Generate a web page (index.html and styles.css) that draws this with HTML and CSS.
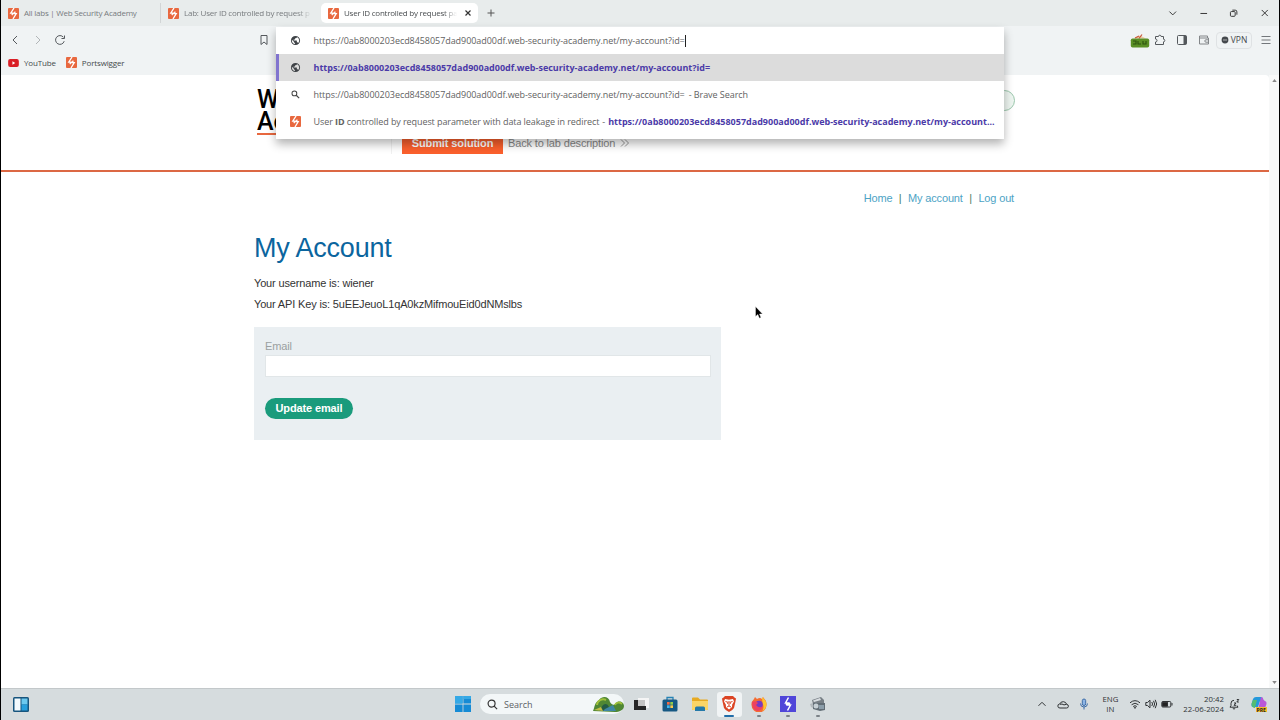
FILE: index.html
```html
<!DOCTYPE html>
<html lang="en">
  <head>
    <meta charset="UTF-8" />
    <meta name="viewport" content="width=device-width, initial-scale=1.0" />
    <title>My Account</title>
    <link rel="stylesheet" href="styles.css">
  </head>
  <body>
    <!-- Shared icons -->
    <svg class="defs" width="0" height="0">
      <symbol id="bolt" viewBox="0 0 12 12">
        <rect width="12" height="12" rx="1" fill="#e8683f" />
        <path d="M6.6 0 3 5.6h2.6L4.2 7.8M5.4 12 9 6.2H6.5L8 4" fill="none" stroke="#fff" stroke-width="1.4" />
      </symbol>
      <symbol id="globe" viewBox="0 0 24 24">
        <path fill="#3f4347" d="M12 2a10 10 0 1 0 0 20 10 10 0 0 0 0-20zm-1 17.900c-3.900-.5-7-3.900-7-7.900 0-.6.100-1.200.200-1.800L9 15v1c0 1.100.9 2 2 2zm6.900-2.500c-.3-.8-1-1.400-1.900-1.400h-1v-3c0-.6-.4-1-1-1H8v-2h2c.6 0 1-.4 1-1V7h2c1.100 0 2-.9 2-2v-.4a8 8 0 0 1 2.900 12.800z" />
      </symbol>
    </svg>

    <div class="screen">
      <!-- Tabs -->
      <div class="tabs">
        <div class="tab tab-first"><svg class="fav"><use href="#bolt" /></svg><span>All labs | Web Security Academy</span></div>
        <div class="tab tab-second"><svg class="fav"><use href="#bolt" /></svg><span class="fade">Lab: User ID controlled by request p</span></div>
        <div class="tab tab-active">
          <svg class="fav"><use href="#bolt" /></svg><span class="fade">User ID controlled by request pa</span>
          <svg class="tab-close" viewBox="0 0 8 8"><path d="M1.500 1.500l5 5M6.500 1.500l-5 5" stroke="#333" stroke-width="1.200" /></svg>
        </div>
        <svg class="new-tab" viewBox="0 0 8 8"><path d="M4 .5v7M.5 4h7" stroke="#555" /></svg>
        <div class="window-buttons">
          <svg viewBox="0 0 10 10"><path d="M1.500 3.500 5 7l3.500-3.500" /></svg>
          <svg viewBox="0 0 10 10"><path d="M1.500 5.500h7" /></svg>
          <svg viewBox="0 0 10 10"><rect x="1.500" y="3.500" width="5" height="5" rx="1" /><path d="M3.500 2h3q1.800 0 1.800 1.800v3" /></svg>
          <svg viewBox="0 0 10 10"><path d="M1.800 1.800l6.400 6.400M8.200 1.800 1.800 8.200" /></svg>
        </div>
      </div>

      <!-- Toolbar -->
      <div class="toolbar">
        <svg class="tool back" viewBox="0 0 12 12"><path d="M8 2 4 6l4 4" /></svg>
        <svg class="tool forward" viewBox="0 0 12 12"><path d="M4 2l4 4-4 4" /></svg>
        <svg class="tool reload" viewBox="0 0 12 12"><path d="M10.200 7.200a4.400 4.400 0 1 1-.8-4M10.500 1.500v3h-3" /></svg>
        <svg class="tool bookmark" viewBox="0 0 12 12"><path d="M3 1.500h6v9L6 8l-3 2.500z" /></svg>

        <div class="tool-right">
          <svg class="ext" viewBox="0 0 20 16">
            <path d="M4 5 10 2l6 3" fill="#e9c9a0" />
            <path d="M5 4.500 9 2.500M9 5l3-4" stroke="#c8553a" stroke-width="1.200" />
            <rect x=".8" y="5" width="18.400" height="9" rx="1.800" fill="#5a8f25" />
            <path d="M3 7.500h3v3H3m5-3v3h3m2-3v3h3v-3" fill="none" stroke="#2c5210" stroke-width="1.100" />
          </svg>
          <svg class="tool" viewBox="0 0 12 12"><path d="M1.500 2.500H4.500a1.300 1.300 0 0 1 2.600 0H9.500v2.700a1.300 1.300 0 0 1 0 2.600v2.700h-8V8a1.500 1.500 0 0 0 0-3z" /></svg>
          <svg class="tool" viewBox="0 0 12 12"><rect x="1.500" y="1.500" width="9" height="9" rx="1" /><path d="M8 2h2v8H8z" fill="#55595d" /></svg>
          <svg class="tool wallet" viewBox="0 0 12 12"><path d="M1.500 2h8v2M1.500 2v8h9V4h-9M10.500 5.800H8a1.200 1.200 0 0 0 0 2.400h2.500" /></svg>
          <div class="vpn"><svg viewBox="0 0 8 8"><circle cx="4" cy="4" r="3.400" fill="#45494d" /><path d="M2 4h4" stroke="#ccc" stroke-width=".8" /></svg>VPN</div>
          <svg class="tool menu" viewBox="0 0 12 12"><path d="M1.500 2.500h9M1.500 6h9M1.500 9.500h9" /></svg>
        </div>

        <!-- Address bar with suggestions -->
        <div class="omnibox">
          <div class="row url"><svg class="lead"><use href="#globe" /></svg><span class="link">https://0ab8000203ecd8458057dad900ad00df.web-security-academy.net/my-account?id=</span><i class="caret"></i></div>
          <div class="row selected"><svg class="lead"><use href="#globe" /></svg><b class="strong-url">https://0ab8000203ecd8458057dad900ad00df.web-security-academy.net/my-account?id=</b></div>
          <div class="row"><svg class="lead" viewBox="0 0 12 12"><circle cx="4.800" cy="4.800" r="2.600" fill="none" stroke="#444" stroke-width="1.100" /><path d="M6.800 6.800 10 10" stroke="#444" stroke-width="1.300" /></svg><span class="link">https://0ab8000203ecd8458057dad900ad00df.web-security-academy.net/my-account?id=</span><span class="engine">- Brave Search</span></div>
          <div class="row"><svg class="lead"><use href="#bolt" /></svg><span class="title">User <b>ID</b> controlled by request parameter with data leakage in redirect</span><span class="dash">-</span><b class="long-url">https://0ab8000203ecd8458057dad900ad00df.web-security-academy.net/my-account...</b></div>
        </div>
      </div>

      <!-- Bookmarks -->
      <div class="bookmarks">
        <svg class="yt" viewBox="0 0 12 9"><rect width="12" height="9" rx="2.200" fill="#d91f26" /><path d="M4.800 2.600v3.800L8 4.500z" fill="#fff" /></svg><span>YouTube</span>
        <svg class="fav"><use href="#bolt" /></svg><span>Portswigger</span>
      </div>

      <!-- Page -->
      <div class="viewport">
        <div class="page">
          <header class="lab-header">
            <div class="logo"><div>W</div><div>Ac</div></div>
            <div class="lab-actions">
              <button class="submit">Submit solution</button>
              <span class="back-link">Back to lab description</span>
              <svg viewBox="0 0 10 10"><path d="M1 1.500 4.500 5 1 8.500M5 1.500 8.500 5 5 8.500" /></svg>
            </div>
            <div class="lab-status"></div>
          </header>

          <main class="container">
            <nav><a>Home</a><i>|</i><a>My account</a><i>|</i><a>Log out</a></nav>
            <h1>My Account</h1>
            <p>Your username is: wiener</p>
            <p>Your API Key is: 5uEEJeuoL1qA0kzMifmouEid0dNMslbs</p>
            <form>
              <label for="email">Email</label>
              <input type="email" id="email" />
              <button type="button">Update email</button>
            </form>
          </main>
          <svg class="cursor" viewBox="0 0 8 13"><path d="M.5.5v10l2.300-2 1.600 3.700 1.600-.7L4.500 8h3z" fill="#000" stroke="#fff" stroke-width=".4" /></svg>
        </div>
        <div class="scrollbar">
          <svg viewBox="0 0 6 4"><path d="M0 4 3 0l3 4z" /></svg>
          <svg viewBox="0 0 6 4"><path d="M0 0l3 4 3-4z" /></svg>
        </div>
      </div>

      <!-- Taskbar -->
      <div class="taskbar">
        <svg class="widgets" viewBox="0 0 16 15">
          <rect width="16" height="15" rx="1.500" fill="#17557e" />
          <path d="M1.500 1.500h6v12h-6z" fill="#f3fafd" /><path d="M8.500 1.500h6v6h-6z" fill="#6cc9ef" /><path d="M8.500 7.500h6v6h-6z" fill="#279fdc" />
        </svg>

        <div class="apps">
          <svg class="start" viewBox="0 0 16 16"><path d="M0 0h7.600v7.600H0zM8.400 0H16v7.600H8.400zM0 8.400h7.600V16H0zM8.400 8.400H16V16H8.400z" fill="#168bd5" /><path d="M0 0h7.600v7.600H0zM8.400 0H16v3H8.400z" fill="#35a9e6" /></svg>
          <div class="search">
            <svg class="search-icon" viewBox="0 0 12 12"><circle cx="5" cy="5" r="3.800" /><path d="M7.800 7.800 11 11" /></svg>
            <span>Search</span>
            <svg class="search-art" viewBox="0 0 31 17">
              <path d="M0 15C2 11 1 7 6 4c4-5 10-3 11 2 2 3 4 4 6 1 3-3 8-1 8 3 0 4-5 6-9 6z" fill="#4f8734" />
              <path d="M4 9c0-4 5-7 9-5M22 9c1-3 5-3 7-1" stroke="#a0c03c" stroke-width="2" fill="none" />
              <path d="M10 9q4-3 6 2l5 4H6z" fill="#245c45" /><path d="M12 13l8-4 3 6H10z" fill="#3d86a5" /><path d="M1 14l7-3 2 4z" fill="#c3bc45" />
            </svg>
          </div>
          <div class="app"><svg viewBox="0 0 16 16"><path d="M5 2h11v10H5z" fill="#f5f5f5" /><path d="M1 4h4v6h8v4H1z" fill="#262626" /><path d="M5 4h7v6H5z" fill="#c4c4c4" /></svg></div>
          <div class="app"><svg viewBox="0 0 16 16"><path d="M5 4V1.500h6V4" fill="none" stroke="#2783b5" stroke-width="1.300" /><rect x=".5" y="3.500" width="15" height="12" rx="1.500" fill="#165883" /><path d="M5 6h2.700v2.700H5z" fill="#ef6a45" /><path d="M8.300 6H11v2.700H8.300z" fill="#90ca4b" /><path d="M5 9.300h2.700V12H5z" fill="#40b6ed" /><path d="M8.300 9.300H11V12H8.300z" fill="#fac94b" /></svg></div>
          <div class="app"><svg viewBox="0 0 16 16"><path d="M0 2.500Q0 1.500 1 1.500h5l2 2h7q1 0 1 1V13q0 1-1 1H1q-1 0-1-1z" fill="#e7aa22" /><path d="M0 5h16v8q0 1-1 1H1q-1 0-1-1z" fill="#fbd566" /><path d="M3 15v-3q0-1.500 1.500-1.500h7Q13 10.500 13 12v3z" fill="#2479a9" /></svg></div>
          <div class="app current"><svg viewBox="0 0 16 16"><path d="M4 0h8l1.500 1.500 1.500 1-.5 3L13 12q-1 2-5 4-4-2-5-4L1.500 5.500 1 2.500l1.500-1z" fill="#db4525" /><path d="M4 3l4 .8L12 3l1 2.500-1.800 3L11 11l-3 2.500L5 11l-.2-2.500L3 5.500z" fill="#fff" /><path d="M4.500 5.500l2.500.8-.5 1.500M11.500 5.500 9 6.300l.5 1.500M8 5v5M6 11l2-1 2 1" fill="none" stroke="#db4525" /></svg></div>
          <div class="app running"><svg viewBox="0 0 16 16"><path d="M3 3l1-2 2 2q3-2 5 0l1-2q4 4 3.500 8a7.500 7.500 0 0 1-15 0Q0 6 3 3z" fill="#f46c32" /><path d="M11 1q5 4 4.500 8-.5 4-4 6 2-4 0-8z" fill="#ffc52f" /><circle cx="8" cy="8.500" r="3.800" fill="#773bc1" /><path d="M1 6q4-2 6 1L5 9q3 4 7 1-1 5-6 5-5-1-5-9z" fill="#ed4260" /></svg></div>
          <div class="app running"><svg viewBox="0 0 16 16"><path d="M0 0h16v16H0z" fill="#5046d9" /><path d="M8.500 1.500 5.500 7H8l-2 2M7.500 14.500 10.500 9H8l2-2" fill="none" stroke="#fff" stroke-width="1.500" /></svg></div>
          <div class="app running"><svg viewBox="0 0 16 16"><path d="M2 4l9-3 3 3v4H3z" fill="#777f85" /><path d="M3 4.500 10 2l1 2-7 2z" fill="#d8dde0" /><path d="M3 7h12v7l-5 1-7-2z" fill="#626d75" /><circle cx="6" cy="10" r="2.500" fill="#c7d0d5" /><path d="M9 9h5v4H9z" fill="#8b9da9" /><path d="M0 8l3-1v5l-2-1z" fill="#b2b8bc" /></svg></div>
        </div>

        <div class="tray">
          <svg class="chevron" viewBox="0 0 12 12"><path d="M2.500 7.800 6 4.300l3.500 3.500" /></svg>
          <svg class="cloud" viewBox="0 0 12 12"><path d="M3 10h6.500a1.800 1.800 0 0 0 .2-3.600A3.700 3.700 0 0 0 2.700 6 2 2 0 0 0 3 10zM3 6.300q2-.8 4 .6l2.500-.6" /></svg>
          <svg class="mic" viewBox="0 0 12 12"><rect x="4.300" y="1" width="3.400" height="6.500" rx="1.700" fill="#8db5e5" /><path d="M2.500 5.500a3.500 3.500 0 0 0 7 0M6 9v2.500" /></svg>
          <div class="lang">ENG<br>IN</div>
          <svg class="wifi" viewBox="0 0 12 12"><path d="M1 4.800q5-4.300 10 0M2.600 6.700q3.400-3 6.800 0M4.200 8.500q1.800-1.600 3.600 0" /><circle cx="6" cy="9.700" r=".6" /></svg>
          <svg class="sound" viewBox="0 0 12 12"><path d="M.8 4.500h1.700L5 2.200v7.600L2.500 7.500H.8zM6.800 4q1.500 2 0 4M8.500 2.800q2.300 3.200 0 6.400M10.200 1.800q3 4.200 0 8.400" /></svg>
          <svg class="battery" viewBox="0 0 12 12"><rect x=".8" y="3.500" width="9" height="5.500" rx="1" /><path d="M1.500 4.200h5v4h-5z" fill="#222" /><path d="M11 5v2.500" /></svg>
          <div class="clock">20:42<br>22-06-2024</div>
          <svg class="bell" viewBox="0 0 12 12"><path d="M6 2.300a3 3 0 0 0-3 3v2.200L2 9.200h8L9 7.500M4.800 10.500q1.200 1 2.400 0M6 5h2L6 7.300h2M8.800 1.500h2L8.800 4h2" /></svg>
          <svg class="copilot" viewBox="0 0 16 16">
            <path d="M5 1h5q1.500 0 2 2l.5 2H9L7 11H2Q0 11 .5 8L2 3q.8-2 3-2z" fill="#2599db" />
            <path d="M10 1q2 0 2.500 3l1.500 1q2 .5 1.500 3L14 12q-1 2-3 2H7l2-9z" fill="#ba58d7" />
            <path d="M.5 8 2 4h4L4 12q-3 0-3.500-4z" fill="#54bd72" /><path d="M5 11h11v5H5z" fill="#f7bd28" />
            <text x="5.500" y="15.500">PRE</text>
          </svg>
        </div>
      </div>
    </div>
  </body>
</html>
```
FILE: styles.css
```css
:root {
  --ui: "Open Sans", "Noto Sans", sans-serif;
  --page: "Liberation Sans", Arial, sans-serif;
  --chrome: #f0f3f4;
  --strip: #e8ecec;
  --link: #4da3c5;
  --purple: #4b3aa8;
}

* {
  box-sizing: border-box;
}

body {
  margin: 0;
  overflow: hidden;
  background: #fff;
  font-family: var(--ui);
}

.defs {
  position: absolute;
}

svg {
  display: block;
  flex: none;
}

.screen {
  width: 1280px;
  height: 720px;
  display: flex;
  flex-direction: column;
  border: solid #000;
  border-width: 0 1px;
}

/* Tabs */
.tabs {
  height: 26px;
  flex: none;
  display: flex;
  align-items: center;
  background: var(--strip);
  font-size: 8px;
  letter-spacing: -0.230px;
  color: #777b7e;
  white-space: nowrap;
}

.tab {
  display: flex;
  align-items: center;
  height: 20px;
}

.tab span {
  padding-bottom: 1px;
}

.fav {
  width: 11px;
  height: 11px;
  margin-right: 5px;
}

.tab-first {
  width: 160px;
  padding-left: 7px;
  border-right: 1px solid #d2d5d6;
}

.tab-second {
  width: 160px;
  padding-left: 7px;
}

.fade {
  width: 128px;
  -webkit-mask-image: linear-gradient(90deg, #000 88%, transparent);
  mask-image: linear-gradient(90deg, #000 88%, transparent);
}

.tab-active {
  width: 157px;
  padding-left: 7px;
  background: #fff;
  border-radius: 5px;
  color: #4b4f52;
}

.tab-active .fade {
  width: 113px;
}

.tab-close {
  width: 8px;
  height: 8px;
  margin-left: 7px;
}

.new-tab {
  width: 8px;
  height: 8px;
  margin-left: 9px;
}

.window-buttons {
  margin-left: auto;
  display: flex;
  gap: 21px;
  padding-right: 10px;
}

.window-buttons svg {
  width: 9.500px;
  height: 10px;
  fill: none;
  stroke: #303030;
}

/* Toolbar */
.toolbar {
  position: relative;
  height: 28px;
  flex: none;
  display: flex;
  align-items: center;
  background: var(--chrome);
}

.tool {
  width: 12px;
  height: 12px;
  fill: none;
  stroke: #55595d;
}

.back {
  margin-left: 8px;
}

.forward {
  margin-left: 11px;
  opacity: 0.400;
}

.reload {
  margin-left: 10px;
}

.bookmark {
  margin-left: 192px;
}

.tool-right {
  margin-left: auto;
  display: flex;
  align-items: center;
  padding-right: 7px;
}

.ext {
  width: 20px;
  height: 17px;
  margin: 3px 4px 0 0;
}

.tool-right .tool + .tool {
  margin-left: 10px;
}

.wallet {
  opacity: 0.700;
}

.vpn {
  width: 36px;
  height: 17px;
  margin: 0 8px 0 6px;
  display: flex;
  align-items: center;
  justify-content: center;
  gap: 2px;
  border: 1px solid #dfe2e4;
  border-radius: 4px;
  font-size: 8.500px;
  line-height: 12px;
  color: #44484c;
}

.vpn svg {
  width: 8px;
  height: 8px;
}

.menu {
  opacity: 0.800;
}

/* Address bar and suggestions lie over the page */
.omnibox {
  position: absolute;
  z-index: 5;
  left: 275px;
  top: 1px;
  width: 728px;
  height: 112px;
  background: #fff;
  box-shadow: 0 5px 9px rgba(0, 0, 0, 0.300);
}

.row {
  height: 27px;
  display: flex;
  align-items: center;
  padding-left: 14px;
  font-size: 9px;
  color: #626262;
  white-space: nowrap;
}

.row span {
  padding-bottom: 1px;
  letter-spacing: -0.055px;
}

.lead {
  width: 11px;
  height: 11px;
  margin-right: 12.500px;
}

.selected {
  background: #dcdcdc;
  border-left: 3px solid #8174cf;
  padding-left: 11px;
}

.row.selected b,
.long-url {
  color: var(--purple);
}

.row b {
  font-weight: 700;
}

.row .title {
  letter-spacing: -0.080px;
}

.long-url {
  padding-bottom: 1px;
}

.caret {
  width: 1px;
  height: 12px;
  background: #222;
}

.row .engine {
  margin-left: 4px;
}

.dash {
  margin: 0 3px;
}

/* Bookmarks */
.bookmarks {
  height: 21px;
  flex: none;
  display: flex;
  align-items: center;
  padding: 0 0 4px 7px;
  background: var(--chrome);
  font-size: 8px;
  letter-spacing: -0.150px;
  color: #45494c;
}

.yt {
  width: 11px;
  height: 8px;
  margin-right: 5px;
}

.bookmarks span {
  margin-right: 10px;
}

/* Page */
.viewport {
  flex: 1;
  min-height: 0;
  display: flex;
  background: var(--chrome);
}

.page {
  position: relative;
  width: 1268px;
  background: #fff;
  border-top-right-radius: 4px;
  font-family: var(--page);
}

.scrollbar {
  flex: 1;
  display: flex;
  flex-direction: column;
  align-items: center;
  justify-content: space-between;
  padding: 4px 0;
  background: #f8f9f9;
}

.scrollbar svg {
  width: 5px;
  height: 3px;
  fill: #888;
}

.lab-header {
  height: 97px;
  display: flex;
  padding-left: 255px;
  border-bottom: 2px solid #dc6844;
}

.logo {
  width: 135px;
  height: 46px;
  margin-top: 14px;
  padding-left: 1px;
  font-family: Roboto, sans-serif;
  font-size: 25px;
  font-weight: 500;
  line-height: 22px;
  color: #000;
}

.logo::after {
  content: "";
  display: block;
  width: 60px;
  height: 2px;
  background: #e8683f;
}

.lab-actions {
  width: 501px;
  margin-top: 56px;
  height: 23px;
  padding-left: 10px;
  display: flex;
  align-items: center;
  border-left: 1px solid #f1f1f1;
}

.submit {
  width: 101px;
  height: 23px;
  padding: 0;
  border: 0;
  background: #fb602d;
  color: #fff;
  font: bold 11px var(--page);
  letter-spacing: -0.100px;
}

.back-link {
  margin: 0 5px;
  font-size: 11px;
  letter-spacing: -0.150px;
  color: #888;
}

.lab-actions svg {
  width: 10px;
  height: 10px;
  fill: none;
  stroke: #999;
}

.lab-status {
  width: 123px;
  height: 21px;
  margin-top: 15px;
  border: 1px solid #9ac7ac;
  border-radius: 11px;
  background: #edf5f0;
}

.container {
  width: 760px;
  margin-left: 253px;
  font-size: 11px;
  letter-spacing: -0.160px;
  color: #333;
}

nav {
  display: flex;
  justify-content: flex-end;
  padding-top: 20px;
  line-height: 13px;
  color: var(--link);
}

nav i {
  margin: 0 6.500px;
  font-style: normal;
  color: #498064;
}

h1 {
  margin: 28px 0 14px;
  font-size: 27px;
  letter-spacing: -0.200px;
  line-height: 30px;
  font-weight: 400;
  color: #0b659e;
}

p {
  margin: 0 0 8px;
  line-height: 13px;
}

form {
  width: 467px;
  height: 113px;
  margin-top: 16px;
  padding: 13px 11px;
  background: #eaeff2;
}

label {
  display: block;
  line-height: 13px;
  color: #9a9fa1;
}

input {
  display: block;
  width: 446px;
  height: 22px;
  margin: 2px 0 21px;
  border: 1px solid #e1e6e8;
  background: #fff;
}

form button {
  width: 88px;
  height: 21px;
  padding: 0 0 1px;
  border: 0;
  border-radius: 11px;
  background: #1a9b7c;
  color: #fff;
  font: bold 11px var(--page);
  letter-spacing: -0.130px;
}

.cursor {
  position: absolute;
  left: 754px;
  top: 231px;
  width: 8px;
  height: 13px;
}

/* Taskbar */
.taskbar {
  height: 32px;
  flex: none;
  display: flex;
  align-items: center;
  padding-bottom: 1px;
  background: #d6dcde;
  border-top: 1px solid #c3c8ca;
}

.widgets {
  width: 16px;
  height: 15px;
  margin-left: 12px;
}

.apps {
  display: flex;
  align-items: center;
  margin-left: 426px;
}

.start {
  width: 16px;
  height: 16px;
}

.search {
  width: 144px;
  height: 20px;
  margin: 0 4px 0 9px;
  padding-left: 7px;
  display: flex;
  align-items: center;
  border-radius: 10px;
  background: #f3f7f8;
  font-size: 9px;
  color: #5c6165;
}

.search-icon {
  width: 11px;
  height: 11px;
  margin-right: 6px;
  fill: none;
  stroke: #333;
  stroke-width: 1.300;
}

.search-art {
  width: 31px;
  height: 17px;
  margin-left: auto;
}

.app {
  position: relative;
  width: 25px;
  height: 25px;
  margin-right: 4.500px;
  display: flex;
  align-items: center;
  justify-content: center;
  border-radius: 3px;
}

.app svg {
  width: 16px;
  height: 16px;
}

.current {
  background: #f1f4f5;
}

.current::after,
.running::after {
  content: "";
  position: absolute;
  bottom: 0;
  width: 4px;
  height: 2px;
  border-radius: 1px;
  background: #7b8287;
}

.current::after {
  width: 10px;
  background: #206da8;
}

.tray {
  margin-left: auto;
  display: flex;
  align-items: center;
  padding-right: 12px;
  font-size: 7.800px;
  line-height: 10px;
  color: #303335;
}

.tray svg {
  width: 12px;
  height: 12px;
  fill: none;
  stroke: #303335;
}

.tray .cloud {
  margin-left: 9px;
}

.tray .mic {
  margin-left: 9px;
  stroke: #3d6da9;
}

.lang {
  margin: 0 11px 0 12px;
  text-align: center;
}

.lang,
.clock {
  padding-bottom: 1px;
}

.tray .sound {
  margin-left: 4px;
}

.tray .battery {
  margin-left: 4px;
}

.clock {
  margin: 0 4px 0 10px;
  text-align: right;
}

.tray .copilot {
  width: 16px;
  height: 16px;
  margin-left: 11px;
  stroke: none;
}

.copilot text {
  font: bold 5px var(--ui);
  fill: #222;
}
```
